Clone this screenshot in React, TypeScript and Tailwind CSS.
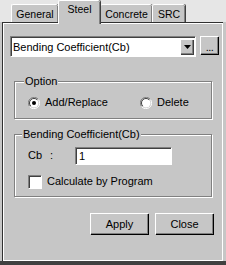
import React from "react";

const face = "bg-[#c6c6c6]";

function Tab({
  label,
  width,
  selected,
}: {
  label: string;
  width: number;
  selected?: boolean;
}) {
  if (selected) {
    return (
      <div
        className={`relative z-10 h-[24px] ${face} rounded-tl-[2px] rounded-tr-[2px] border-l border-t border-white shadow-[1px_0_0_#404040,inset_-1px_0_0_#808080] flex items-start justify-center pt-[1px]`}
        style={{ width }}
      >
        <span className="leading-[14px] text-[10.5px]">{label}</span>
      </div>
    );
  }
  return (
    <div
      className={`h-[18px] ${face} rounded-tl-[2px] rounded-tr-[2px] border-l border-t border-white shadow-[1px_0_0_#404040,inset_-1px_0_0_#808080] flex items-start justify-center pt-[2px]`}
      style={{ width }}
    >
      <span className="leading-[14px] text-[10.5px]">{label}</span>
    </div>
  );
}

function Radio({ checked }: { checked?: boolean }) {
  return (
    <svg width="12" height="12" viewBox="0 0 12 12" className="shrink-0">
      <path d="M10.5 2.5 A5.5 5.5 0 0 0 1.5 9.5" fill="none" stroke="#808080" strokeWidth="1" />
      <path d="M1.5 9.5 A5.5 5.5 0 0 0 10.5 2.5" fill="none" stroke="#ffffff" strokeWidth="1" />
      <circle cx="6" cy="6" r="4.5" fill="#ffffff" />
      <path d="M9.2 2.8 A4.5 4.5 0 0 0 2.8 9.2" fill="none" stroke="#404040" strokeWidth="1" />
      {checked && <circle cx="6" cy="6" r="2" fill="#000" />}
    </svg>
  );
}

function Button({ label, width }: { label: string; width: number }) {
  return (
    <div
      className={`h-[21px] ${face} border-t border-l border-white shadow-[1px_1px_0_#000,inset_-1px_-1px_0_#808080] flex items-center justify-center`}
      style={{ width }}
    >
      {label}
    </div>
  );
}

export default function App() {
  return (
    <div className="w-[226px] h-[265px] bg-[#c6c6c6] font-['Liberation_Sans',Arial,sans-serif] text-[11px] text-black flex flex-col overflow-hidden">
      {/* tabs */}
      <div className="h-[22px] bg-[#e6e6e6] flex items-end pl-[11px]">
        <Tab label="General" width={47} />
        <div className="self-start">
          <Tab label="Steel" width={42} selected />
        </div>
        <Tab label="Concrete" width={52} />
        <Tab label="SRC" width={33} />
      </div>

      {/* panel */}
      <div className="flex">
        <div className="w-[2px]" />
        <div className="w-[221px] h-[239px] bg-[#c6c6c6] border-l border-t border-[#303030] shadow-[inset_1px_1px_0_#ffffff,inset_-1px_-1px_0_#ffffff] flex flex-col">
          {/* combo row */}
          <div className="flex items-start mt-[13px] ml-[7px]">
            <div className="w-[185px] h-[20px] bg-white border-t border-l border-[#808080] shadow-[inset_1px_1px_0_#404040,1px_1px_0_#ffffff] flex items-center">
              <span className="pl-[2px] flex-1 leading-[14px] whitespace-nowrap">
                Bending Coefficient(Cb)
              </span>
              <div className={`w-[14px] h-[16px] mr-[1px] ${face} border-t border-l border-white shadow-[inset_-1px_-1px_0_#404040,inset_-2px_-2px_0_#808080] flex items-center justify-center`}>
                <svg width="7" height="4" viewBox="0 0 7 4">
                  <path d="M0 0 H7 L3.5 4 Z" fill="#000" />
                </svg>
              </div>
            </div>
            <div className={`ml-[5px] w-[18px] h-[18px] ${face} border-t border-l border-white shadow-[1px_1px_0_#000,inset_-1px_-1px_0_#808080] flex items-end justify-center pb-[3px]`}>
              <span className="leading-[8px] tracking-[-0.5px]">...</span>
            </div>
          </div>

          {/* Option group */}
          <div className="ml-[11px] mt-[25px] w-[198px] h-[38px] border border-[#808080] shadow-[inset_1px_1px_0_#ffffff,1px_1px_0_#ffffff] flex flex-col">
            <span className={`-mt-[7px] ml-[9px] self-start px-[1px] leading-[13px] ${face}`}>Option</span>
            <div className="flex items-center mt-[8px] h-[13px]">
              <div className="ml-[13px] w-[112px] flex items-center">
                <Radio checked />
                <span className="ml-[5px] leading-[13px]">Add/Replace</span>
              </div>
              <div className="flex items-center">
                <Radio />
                <span className="ml-[5px] leading-[13px]">Delete</span>
              </div>
            </div>
          </div>

          {/* Bending Coefficient group */}
          <div className="ml-[11px] mt-[15px] w-[198px] h-[63px] border border-[#808080] shadow-[inset_1px_1px_0_#ffffff,1px_1px_0_#ffffff] flex flex-col">
            <span className={`-mt-[7px] ml-[7px] self-start px-[1px] leading-[13px] ${face}`}>
              Bending Coefficient(Cb)
            </span>
            <div className="flex items-center mt-[6px]">
              <span className="ml-[13px] w-[22px] leading-[13px]">Cb</span>
              <span className="leading-[13px]">:</span>
              <div className="ml-[22px] w-[96px] h-[17px] bg-white border-t border-l border-[#808080] shadow-[inset_1px_1px_0_#404040,1px_1px_0_#ffffff] flex items-center pl-[3px]">
                <span className="leading-[13px]">1</span>
              </div>
            </div>
            <div className="flex items-center mt-[11px]">
              <div className="ml-[13px] w-[13px] h-[13px] bg-white border-t border-l border-[#808080] shadow-[inset_1px_1px_0_#404040,1px_1px_0_#ffffff]" />
              <span className="ml-[6px] leading-[13px]">Calculate by Program</span>
            </div>
          </div>

          {/* buttons */}
          <div className="flex mt-[16px] ml-[87px] gap-[7px]">
            <Button label="Apply" width={58} />
            <Button label="Close" width={58} />
          </div>
        </div>
      </div>
      <div className="flex-1 bg-[#404040]" />
    </div>
  );
}
